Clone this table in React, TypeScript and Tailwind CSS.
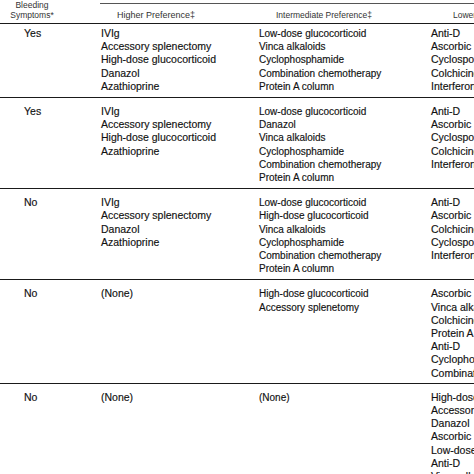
const rows = [
  {
    bleeding: 'Yes',
    higher: ['IVIg', 'Accessory splenectomy', 'High-dose glucocorticoid', 'Danazol', 'Azathioprine'],
    intermediate: ['Low-dose glucocorticoid', 'Vinca alkaloids', 'Cyclophosphamide', 'Combination chemotherapy', 'Protein A column'],
    lower: ['Anti-D', 'Ascorbic acid', 'Cyclosporine', 'Colchicine', 'Interferon'],
    pad: 'pt-[3px] pb-[4px]',
  },
  {
    bleeding: 'Yes',
    higher: ['IVIg', 'Accessory splenectomy', 'High-dose glucocorticoid', 'Azathioprine'],
    intermediate: ['Low-dose glucocorticoid', 'Danazol', 'Vinca alkaloids', 'Cyclophosphamide', 'Combination chemotherapy', 'Protein A column'],
    lower: ['Anti-D', 'Ascorbic acid', 'Cyclosporine', 'Colchicine', 'Interferon'],
    pad: 'pt-[7px] pb-[4px]',
  },
  {
    bleeding: 'No',
    higher: ['IVIg', 'Accessory splenectomy', 'Danazol', 'Azathioprine'],
    intermediate: ['Low-dose glucocorticoid', 'High-dose glucocorticoid', 'Vinca alkaloids', 'Cyclophosphamide', 'Combination chemotherapy', 'Protein A column'],
    lower: ['Anti-D', 'Ascorbic acid', 'Colchicine', 'Cyclosporine', 'Interferon'],
    pad: 'pt-[7px] pb-[4px]',
  },
  {
    bleeding: 'No',
    higher: ['(None)'],
    intermediate: ['High-dose glucocorticoid', 'Accessory splenetomy'],
    lower: ['Ascorbic acid', 'Vinca alkaloids', 'Colchicine', 'Protein A column', 'Anti-D', 'Cyclophosphamide', 'Combination chemotherapy'],
    pad: 'pt-[7px] pb-[3px]',
  },
  {
    bleeding: 'No',
    higher: ['(None)'],
    intermediate: ['(None)'],
    lower: ['High-dose glucocorticoid', 'Accessory splenectomy', 'Danazol', 'Ascorbic acid', 'Low-dose glucocorticoid', 'Anti-D', 'Vinca alkaloids'],
    pad: 'pt-[7px] pb-[3px]',
  },
]

function Cell({ items, className }: { items: string[]; className?: string }) {
  return (
    <div className={`flex flex-col ${className ?? ''}`}>
      {items.map((item, i) => (
        <span key={i} className="whitespace-nowrap">
          {item}
        </span>
      ))}
    </div>
  )
}

export default function App() {
  return (
    <div
      className="h-[474px] w-[474px] overflow-hidden bg-white text-[#111]"
      style={{ fontFamily: '"Liberation Sans", Arial, sans-serif' }}
    >
      <div className="flex h-[23px] leading-[10px] text-[#333]">
        <div className="flex w-[64px] shrink-0 flex-col items-center justify-end pb-[3px] text-[8.5px]">
          <span>Bleeding</span>
          <span>Symptoms*</span>
        </div>
        <div className="ml-[36px] mt-[3px] flex flex-1 items-end border-t border-[#555] pb-[3px]">
          <div className="w-[158px] shrink-0 whitespace-nowrap pl-[17px] text-[9px]">Higher Preference‡</div>
          <div className="w-[172px] shrink-0 whitespace-nowrap pl-[18px] text-[8.5px]">Intermediate Preference‡</div>
          <div className="whitespace-nowrap pl-[23px] text-[8.5px]">Lower Preference‡</div>
        </div>
      </div>

      {rows.map((row, i) => (
        <div
          key={i}
          className={`grid grid-cols-[101px_158px_172px_1fr] border-t-[1.5px] border-[#1a1a1a] text-[10.5px] leading-[13.2px] [-webkit-text-stroke:0.15px_#111] ${row.pad}`}
        >
          <div className="pl-[24px]">{row.bleeding}</div>
          <Cell items={row.higher} />
          <Cell items={row.intermediate} className="text-[10px]" />
          <Cell items={row.lower} />
        </div>
      ))}
    </div>
  )
}
